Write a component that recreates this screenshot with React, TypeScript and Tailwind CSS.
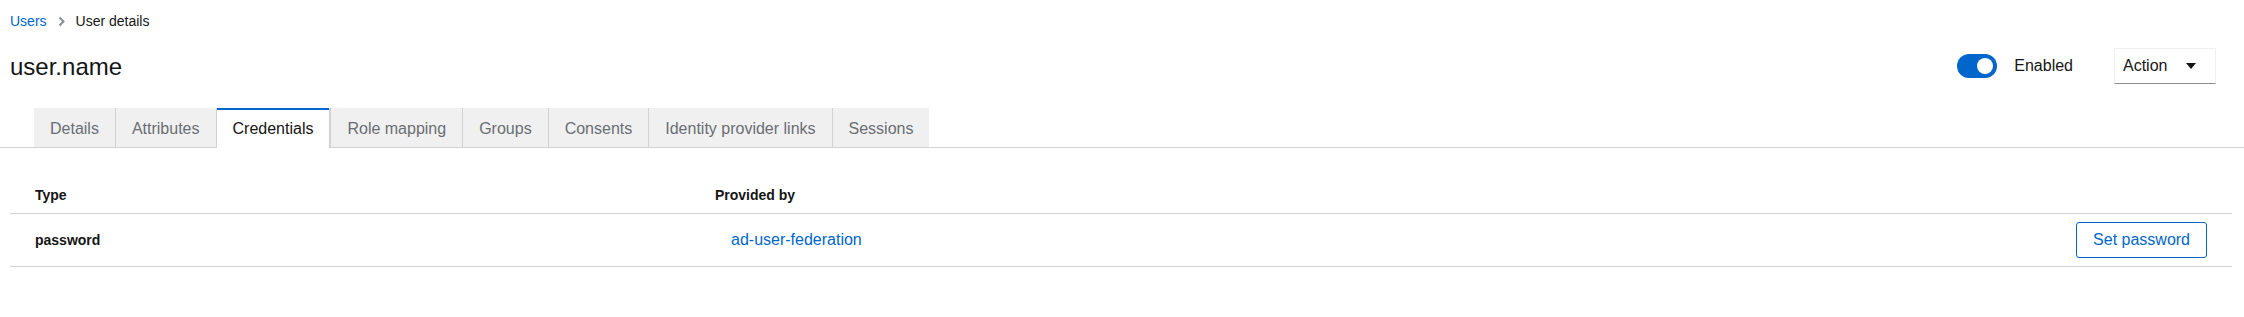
import { useState } from 'react';

const tabs = [
  'Details',
  'Attributes',
  'Credentials',
  'Role mapping',
  'Groups',
  'Consents',
  'Identity provider links',
  'Sessions',
];

// Small chevron used between breadcrumb items
const AngleRight = () => (
  <svg width="7" height="11" viewBox="0 0 7 11" className="mx-[11px]">
    <path d="M1.5 1.5 L5.5 5.5 L1.5 9.5" fill="none" stroke="#8a8d90" strokeWidth="2" />
  </svg>
);

const CaretDown = () => (
  <svg width="10" height="6" viewBox="0 0 10 6">
    <path d="M0 0 L10 0 L5 6 Z" fill="#151515" />
  </svg>
);

export default function App() {
  const [active, setActive] = useState('Credentials');
  const [enabled, setEnabled] = useState(true);

  return (
    <div
      className="w-[2244px] h-[317px] bg-white text-[#151515] overflow-hidden"
      style={{ fontFamily: '"Liberation Sans", Arial, sans-serif' }}
    >
      {/* Breadcrumb + title */}
      <div className="pl-[10px] pt-[11px]">
        <nav className="flex items-center h-[21px] text-[14px] leading-[21px]">
          <a className="text-[#0066cc] cursor-pointer">Users</a>
          <AngleRight />
          <span>User details</span>
        </nav>
        <div className="flex items-center justify-between h-[36px] mt-[16px] pr-[28px]">
          <h1 className="text-[24px] leading-[31px]">user.name</h1>
          <div className="flex items-center">
            <button
              onClick={() => setEnabled(!enabled)}
              className={`w-[40px] h-[24px] rounded-full flex items-center px-[4px] ${
                enabled ? 'bg-[#0066cc] justify-end' : 'bg-[#8a8d90] justify-start'
              }`}
            >
              <span className="w-[16px] h-[16px] rounded-full bg-white" />
            </button>
            <span className="ml-[17px] text-[16px]">Enabled</span>
            <button className="ml-[41px] w-[102px] h-[36px] flex items-center justify-between pl-[8px] pr-[19px] text-[16px] border border-[#f0f0f0] border-b-[#8a8d90]">
              <span>Action</span>
              <CaretDown />
            </button>
          </div>
        </div>
      </div>

      {/* Tabs */}
      <div className="flex mt-[24px] h-[40px]">
        <div className="w-[34px] border-b border-[#d2d2d2]" />
        {tabs.map((t, i) => {
          const isActive = t === active;
          return (
            <button
              key={t}
              onClick={() => setActive(t)}
              className={`relative px-4 text-[16px] h-[40px] border-[#d2d2d2] ${i > 0 ? 'border-l' : ''} ${
                isActive ? 'bg-white text-[#151515] border-r' : 'bg-[#f0f0f0] text-[#6a6e73] border-b'
              }`}
            >
              {isActive && <span className="absolute left-0 right-0 top-0 h-[2px] bg-[#0066cc]" />}
              <span className="relative top-[1px]">{t}</span>
            </button>
          );
        })}
        <div className="flex-1 border-b border-[#d2d2d2]" />
      </div>

      {/* Credentials table */}
      <div className="mt-[29px] ml-[10px] w-[2222px] text-[14px]">
        <div className="grid grid-cols-[689px_1fr_auto] items-center h-[37px] border-b border-[#d2d2d2] font-bold">
          <div className="pl-[25px]">Type</div>
          <div className="pl-[16px]">Provided by</div>
          <div />
        </div>
        <div className="grid grid-cols-[689px_1fr_auto] items-center h-[53px] border-b border-[#d2d2d2]">
          <div className="pl-[25px] font-bold">password</div>
          <div className="pl-[16px]">
            <a className="inline-block px-4 text-[16px] text-[#0066cc] cursor-pointer">ad-user-federation</a>
          </div>
          <div className="pr-[25px]">
            <button className="h-[36px] px-4 text-[16px] text-[#0066cc] border border-[#0066cc] rounded-[3px]">
              Set password
            </button>
          </div>
        </div>
      </div>
    </div>
  );
}
